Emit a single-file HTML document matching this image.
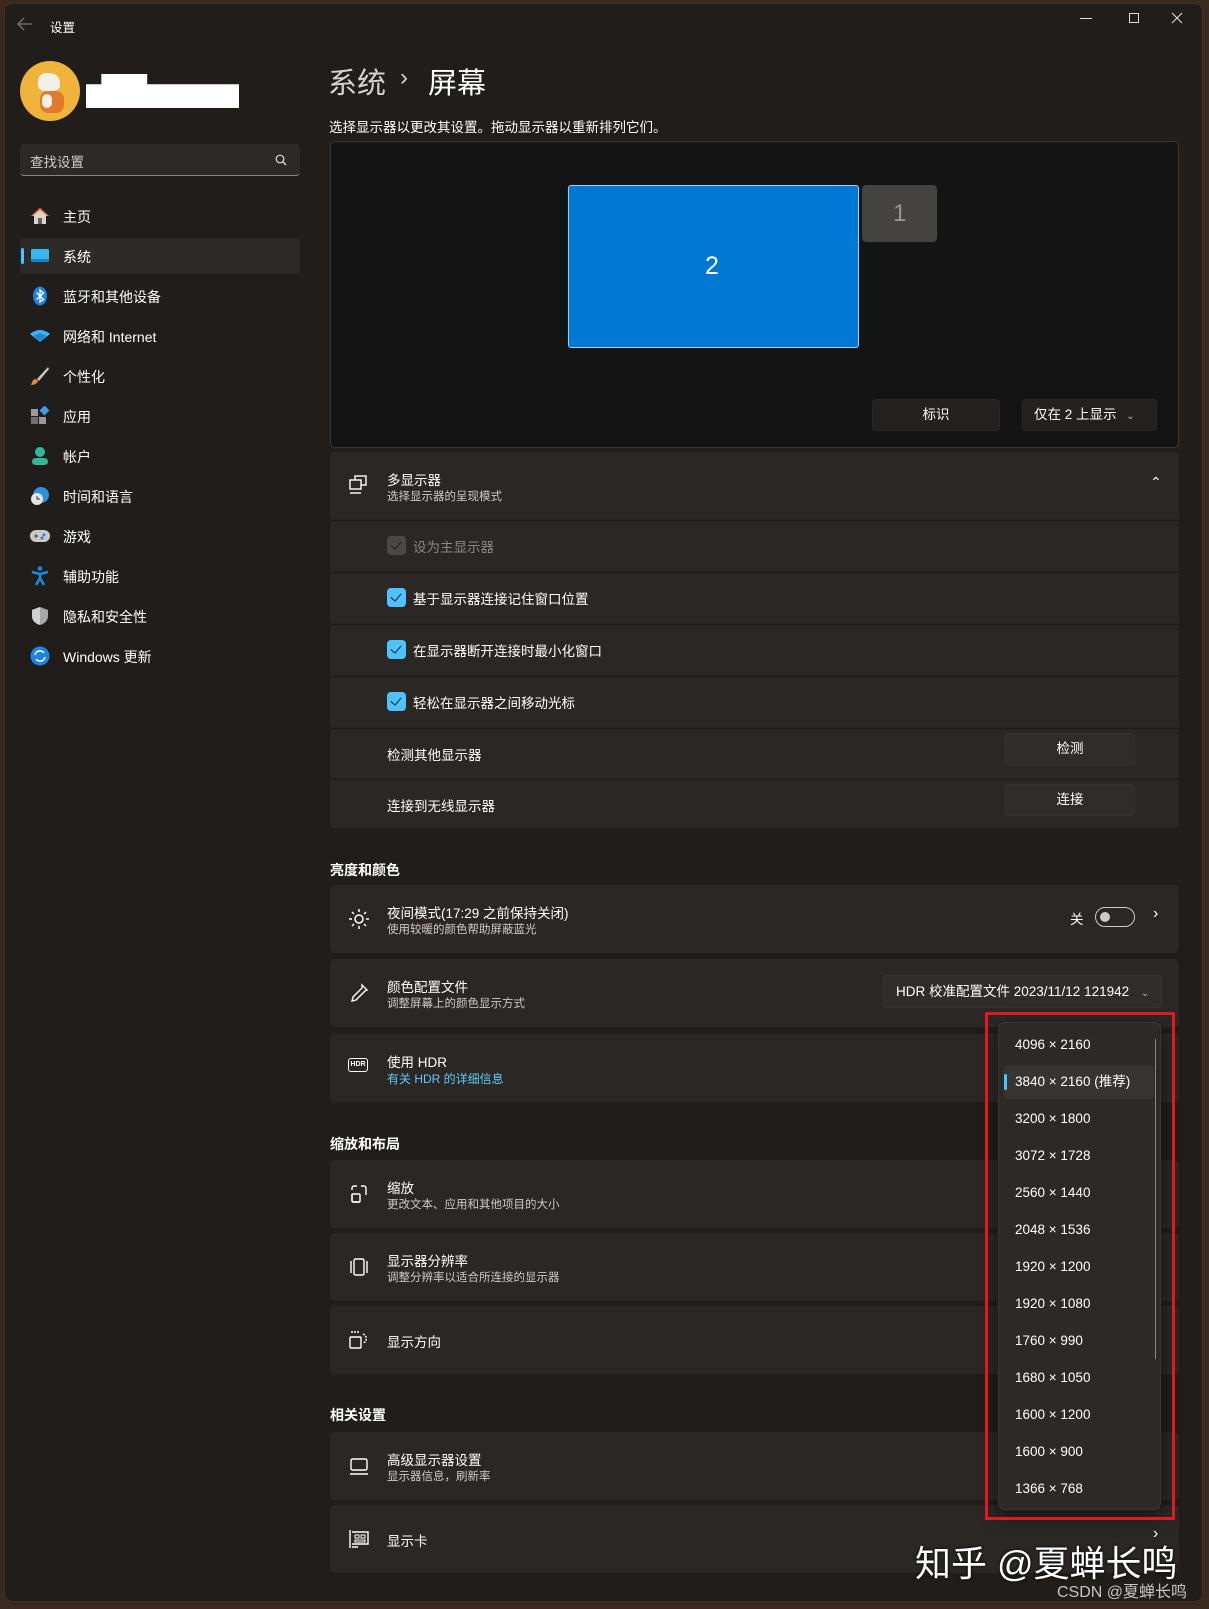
<!DOCTYPE html>
<html><head><meta charset="utf-8">
<style>
*{margin:0;padding:0;box-sizing:border-box}
body{width:1209px;height:1609px;overflow:hidden;background:#3a2a1e;font-family:"Liberation Sans","Noto Sans CJK SC",sans-serif;color:#fff;position:relative}
.win{position:absolute;left:4px;top:3px;width:1199px;height:1599px;background:#211d1b;border:1px solid #3a3532;border-radius:8px;overflow:hidden}
.wrap{position:absolute;left:-5px;top:-4px;width:1209px;height:1609px}
.a{position:absolute}
.t{position:absolute;white-space:nowrap}
.nav{position:absolute;left:24px;height:36px;width:276px;font-size:14px}
.nav .ic{position:absolute;left:6px;top:8px;width:20px;height:20px}
.nav span{position:absolute;left:39px;top:9px}
.card{position:absolute;left:326px;width:849px;background:#2b2725;border-radius:5px}
.row{position:absolute;left:326px;width:849px;background:#2b2725;border-top:1px solid #1e1b19}
.ttl{position:absolute;left:57px;font-size:13.5px}
.sub{position:absolute;left:57px;font-size:11.5px;color:#cfcac6}
.cb{position:absolute;left:57px;width:19px;height:19px;border-radius:4px;background:#4cc2ff}
.cb:after{content:"";position:absolute;left:6px;top:3px;width:5px;height:9px;border:solid #1a1a1a;border-width:0 1.5px 1.5px 0;transform:rotate(40deg)}
.btn{position:absolute;background:#2f2c2a;border:1px solid #383431;border-radius:4px;font-size:13.5px;text-align:center}
.sec{position:absolute;left:326px;font-size:14px;font-weight:bold}
.ico{position:absolute;left:18px;width:22px;height:22px}
.fl{position:absolute;left:994px;top:1019px;width:163px;height:488px;background:#2c2927;border:1px solid #3b3735;border-radius:7px;box-shadow:0 6px 18px rgba(0,0,0,.5)}
.fi{position:absolute;left:16px;font-size:13.5px;line-height:18px;height:18px;white-space:nowrap}
</style></head><body>
<div class="win"><div class="wrap">
<svg class="a" style="left:17px;top:17px" width="16" height="14" viewBox="0 0 16 14"><path d="M15 7H2M7 1L1 7l6 6" stroke="#777" stroke-width="1.3" fill="none"/></svg>
<div class="t" style="left:50px;top:17px;font-size:12.5px">设置</div>
<div class="a" style="left:1080px;top:18px;width:12px;height:1px;background:#ddd"></div>
<div class="a" style="left:1129px;top:13px;width:10px;height:10px;border:1px solid #ddd"></div>
<svg class="a" style="left:1171px;top:12px" width="12" height="12"><path d="M1 1L11 11M11 1L1 11" stroke="#ddd" stroke-width="1.1"/></svg>
<div class="a" style="left:20px;top:61px;width:60px;height:60px;border-radius:50%;background:#f0b43c;overflow:hidden">
 <div class="a" style="left:18px;top:12px;width:22px;height:18px;background:#f2eee8;border-radius:8px 10px 6px 6px"></div>
 <div class="a" style="left:20px;top:30px;width:24px;height:22px;background:#e07a2a;border-radius:8px"></div>
 <div class="a" style="left:22px;top:33px;width:10px;height:14px;background:#f6efe6;border-radius:5px"></div>
</div>
<div class="a" style="left:86px;top:74px;width:153px;height:34px;background:#fff;clip-path:polygon(0 30%,10% 30%,10% 0,40% 0,40% 30%,100% 30%,100% 100%,0 100%)"></div>
<div class="a" style="left:20px;top:144px;width:280px;height:32px;background:#2c2927;border-radius:4px;border-bottom:1px solid #8a8581"></div>
<div class="t" style="left:30px;top:151px;font-size:13.5px;color:#d0ccc8">查找设置</div>
<svg class="a" style="left:275px;top:154px" width="12" height="12"><circle cx="5" cy="5" r="3.8" stroke="#ddd" fill="none" stroke-width="1.2"/><path d="M8 8l3 3" stroke="#ddd" stroke-width="1.3"/></svg>
<div class="a" style="left:20px;top:238px;width:280px;height:36px;background:#2d2a28;border-radius:4px"></div>
<div class="a" style="left:21px;top:248px;width:3px;height:16px;background:#4cc2ff;border-radius:2px"></div>
<div class="nav" style="top:198px"><svg class="ic" viewBox="0 0 20 20"><path d="M10 2L1 10h3v8h12v-8h3z" fill="#d8d4d0"/><path d="M10 2L1 10h2L10 4l7 6h2z" fill="#e87b2c"/><rect x="8" y="12" width="4" height="6" fill="#6b5f58"/></svg><span>主页</span></div>
<div class="nav" style="top:238px"><svg class="ic" viewBox="0 0 20 20"><rect x="1" y="3" width="18" height="13" rx="1" fill="#3cb6ee"/><rect x="1" y="13" width="18" height="3" fill="#1c7fc4"/></svg><span>系统</span></div>
<div class="nav" style="top:278px"><svg class="ic" viewBox="0 0 20 20"><ellipse cx="10" cy="10" rx="7" ry="9.5" fill="#1b82e0"/><path d="M6.5 6.5l7 7L10 16V4l3.5 3L6.5 13.5" stroke="#fff" stroke-width="1.3" fill="none"/></svg><span>蓝牙和其他设备</span></div>
<div class="nav" style="top:318px"><svg class="ic" viewBox="0 0 20 20"><path d="M0 8Q10 0 20 8L10 16z" fill="#3ab4f0"/><path d="M4 10Q10 5 16 10L10 16z" fill="#1e8ad6"/></svg><span>网络和 Internet</span></div>
<div class="nav" style="top:358px"><svg class="ic" viewBox="0 0 20 20"><path d="M18 1L7 13l2 2L19 3z" fill="#c8c8c8"/><path d="M6 13c-3 0-4 3-5 6 3 0 6-1 7-4z" fill="#e88a30"/></svg><span>个性化</span></div>
<div class="nav" style="top:398px"><svg class="ic" viewBox="0 0 20 20"><rect x="1" y="3" width="7" height="7" fill="#9a9a9a"/><rect x="1" y="11" width="7" height="7" fill="#707070"/><rect x="9" y="11" width="7" height="7" fill="#9a9a9a"/><rect x="11" y="1" width="7" height="7" fill="#3aa0ea" transform="rotate(45 14.5 4.5)"/></svg><span>应用</span></div>
<div class="nav" style="top:438px"><svg class="ic" viewBox="0 0 20 20"><circle cx="10" cy="6" r="5" fill="#2fb89a"/><rect x="2" y="12" width="16" height="7" rx="3.5" fill="#2fb89a"/></svg><span>帐户</span></div>
<div class="nav" style="top:478px"><svg class="ic" viewBox="0 0 20 20"><circle cx="11" cy="9" r="8" fill="#2f8fd8"/><circle cx="7" cy="13" r="6" fill="#e4e4e4"/><path d="M7 10v3h3" stroke="#333" fill="none"/></svg><span>时间和语言</span></div>
<div class="nav" style="top:518px"><svg class="ic" viewBox="0 0 20 20"><rect x="0" y="4" width="20" height="12" rx="6" fill="#c9c9c9"/><circle cx="14" cy="9" r="1.5" fill="#2f7fd0"/><circle cx="12" cy="12" r="1.5" fill="#2f7fd0"/><path d="M4 10h4M6 8v4" stroke="#444"/></svg><span>游戏</span></div>
<div class="nav" style="top:558px"><svg class="ic" viewBox="0 0 20 20"><circle cx="10" cy="2.5" r="2.3" fill="#1a8ae0"/><path d="M2 6l8 2 8-2M10 8v4l-4 7M10 12l4 7" stroke="#1a8ae0" stroke-width="2.6" fill="none"/></svg><span>辅助功能</span></div>
<div class="nav" style="top:598px"><svg class="ic" viewBox="0 0 20 20"><path d="M10 1l8 3v6c0 5-4 8-8 9-4-1-8-4-8-9V4z" fill="#a8a8a8"/><path d="M10 1v18c-4-1-8-4-8-9V4z" fill="#d0d0d0"/></svg><span>隐私和安全性</span></div>
<div class="nav" style="top:638px"><svg class="ic" viewBox="0 0 20 20"><circle cx="10" cy="10" r="9.5" fill="#1a86e0"/><path d="M5 9a5 5 0 0 1 9-2M15 11a5 5 0 0 1-9 2" stroke="#fff" stroke-width="1.5" fill="none"/></svg><span>Windows 更新</span></div>

<div class="t" style="left:328px;top:60px;font-size:29px;color:#d6d2ce">系统</div>
<div class="t" style="left:400px;top:64px;font-size:24px;color:#d6d2ce">›</div>
<div class="t" style="left:428px;top:60px;font-size:29px">屏幕</div>
<div class="t" style="left:329px;top:116px;font-size:13.5px">选择显示器以更改其设置。拖动显示器以重新排列它们。</div>
<div class="a" style="left:330px;top:141px;width:849px;height:307px;background:#151414;border:1px solid #3a3633;border-radius:5px"></div>
<div class="a" style="left:568px;top:185px;width:291px;height:163px;background:#0078d4;border:1px solid #9ccff5;border-radius:3px"></div>
<div class="t" style="left:705px;top:252px;font-size:25px">2</div>
<div class="a" style="left:862px;top:185px;width:75px;height:57px;background:#454342;border-radius:4px"></div>
<div class="t" style="left:893px;top:200px;font-size:24px;color:#9a9896">1</div>
<div class="btn" style="left:872px;top:399px;width:128px;height:32px;line-height:30px;background:#232120;border-color:#2a2726">标识</div>
<div class="btn" style="left:1022px;top:399px;width:135px;height:32px;line-height:30px;text-align:left;padding-left:11px;background:#232120;border-color:#2a2726">仅在 2 上显示 <span style="font-size:10px;color:#bbb;margin-left:6px">⌄</span></div>
<div class="card" style="left:330px;top:452px;height:376px;background:#262320"></div>
<div class="row" style="left:330px;top:452px;height:67px;border-top:none;border-radius:5px 5px 0 0"><svg class="ico" style="top:22px" viewBox="0 0 22 22"><rect x="7" y="2" width="11" height="9" stroke="#fff" fill="none" stroke-width="1.4"/><rect x="2" y="6" width="11" height="9" stroke="#fff" fill="#2b2725" stroke-width="1.4"/><path d="M2 19h11" stroke="#fff" stroke-width="1.4"/></svg><div class="ttl" style="top:17px">多显示器</div><div class="sub" style="top:36px">选择显示器的呈现模式</div><div class="t" style="left:820px;top:22px;font-size:14px">⌃</div></div>
<div class="row" style="left:330px;top:520px;height:51px"><div class="cb" style="top:15px;background:#4a4745"></div><div class="ttl" style="left:83px;top:15px;color:#8a8683">设为主显示器</div></div>
<div class="row" style="left:330px;top:572px;height:51px"><div class="cb" style="top:15px"></div><div class="ttl" style="left:83px;top:15px">基于显示器连接记住窗口位置</div></div>
<div class="row" style="left:330px;top:624px;height:51px"><div class="cb" style="top:15px"></div><div class="ttl" style="left:83px;top:15px">在显示器断开连接时最小化窗口</div></div>
<div class="row" style="left:330px;top:676px;height:51px"><div class="cb" style="top:15px"></div><div class="ttl" style="left:83px;top:15px">轻松在显示器之间移动光标</div></div>
<div class="row" style="left:330px;top:728px;height:50px"><div class="ttl" style="top:15px">检测其他显示器</div><div class="btn" style="left:675px;top:4px;width:130px;height:32px;line-height:30px">检测</div></div>
<div class="row" style="left:330px;top:779px;height:49px;border-radius:0 0 5px 5px"><div class="ttl" style="top:15px">连接到无线显示器</div><div class="btn" style="left:675px;top:4px;width:130px;height:32px;line-height:30px">连接</div></div>

<div class="sec" style="left:330px;top:860px">亮度和颜色</div>
<div class="card" style="left:330px;top:885px;height:68px"><svg class="ico" style="top:23px" viewBox="0 0 22 22"><circle cx="11" cy="11" r="4" stroke="#fff" fill="none" stroke-width="1.5"/><path d="M11 1v3M11 18v3M1 11h3M18 11h3M4 4l2 2M16 16l2 2M4 18l2-2M16 6l2-2" stroke="#fff" stroke-width="1.5"/></svg><div class="ttl" style="top:17px">夜间模式(17:29 之前保持关闭)</div><div class="sub" style="top:36px">使用较暖的颜色帮助屏蔽蓝光</div><div class="t" style="left:740px;top:23px;font-size:13.5px">关</div><div class="a" style="left:765px;top:22px;width:40px;height:20px;border:1px solid #cfcac6;border-radius:10px"><div class="a" style="left:4px;top:4px;width:10px;height:10px;border-radius:50%;background:#cfcac6"></div></div><div class="t" style="left:823px;top:20px;font-size:16px">›</div></div>
<div class="card" style="left:330px;top:959px;height:68px"><svg class="ico" style="top:23px" viewBox="0 0 22 22"><path d="M14 3l5 5-2 1-9 9-4 1 1-4 9-9z" stroke="#fff" fill="none" stroke-width="1.4"/></svg><div class="ttl" style="top:17px">颜色配置文件</div><div class="sub" style="top:36px">调整屏幕上的颜色显示方式</div><div class="btn" style="left:553px;top:16px;width:279px;height:33px;line-height:31px;text-align:left;padding-left:12px">HDR 校准配置文件 2023/11/12 121942 <span style="font-size:10px;color:#bbb;margin-left:8px">⌄</span></div></div>
<div class="card" style="left:330px;top:1034px;height:68px"><div class="ico" style="top:24px;width:20px;height:14px;border:1.5px solid #fff;border-radius:3px;font-size:7px;font-weight:bold;text-align:center;line-height:11px">HDR</div><div class="ttl" style="top:17px">使用 HDR</div><div class="sub" style="top:36px;color:#60c8f8;font-size:12px">有关 HDR 的详细信息</div></div>

<div class="sec" style="left:330px;top:1134px">缩放和布局</div>
<div class="card" style="left:330px;top:1160px;height:68px"><svg class="ico" style="top:23px" viewBox="0 0 22 22"><path d="M9 3H6a2 2 0 0 0-2 2v2M13 3h3a2 2 0 0 1 2 2v7M4 11v6a2 2 0 0 0 2 2h6" stroke="#fff" fill="none" stroke-width="1.4"/><rect x="4" y="11" width="8" height="8" rx="1" stroke="#fff" fill="none" stroke-width="1.4"/></svg><div class="ttl" style="top:17px">缩放</div><div class="sub" style="top:36px">更改文本、应用和其他项目的大小</div></div>
<div class="card" style="left:330px;top:1233px;height:68px"><svg class="ico" style="top:23px" viewBox="0 0 22 22"><rect x="6" y="3" width="10" height="16" rx="1.5" stroke="#fff" fill="none" stroke-width="1.4"/><path d="M3 5v12M19 5v12" stroke="#fff" stroke-width="1.4"/></svg><div class="ttl" style="top:17px">显示器分辨率</div><div class="sub" style="top:36px">调整分辨率以适合所连接的显示器</div></div>
<div class="card" style="left:330px;top:1306px;height:68px"><svg class="ico" style="top:23px" viewBox="0 0 22 22"><rect x="2" y="8" width="11" height="11" rx="1" stroke="#fff" fill="none" stroke-width="1.4"/><path d="M3 3h9M15 5a5 5 0 0 1 2 8l-2 1" stroke="#fff" fill="none" stroke-width="1.4" stroke-dasharray="2 1"/></svg><div class="ttl" style="top:25px">显示方向</div></div>

<div class="sec" style="left:330px;top:1405px">相关设置</div>
<div class="card" style="left:330px;top:1432px;height:68px"><svg class="ico" style="top:23px" viewBox="0 0 22 22"><rect x="3" y="4" width="16" height="11" rx="1.5" stroke="#fff" fill="none" stroke-width="1.4"/><path d="M2 19h18" stroke="#fff" stroke-width="1.4"/></svg><div class="ttl" style="top:17px">高级显示器设置</div><div class="sub" style="top:36px">显示器信息，刷新率</div></div>
<div class="card" style="left:330px;top:1505px;height:68px"><svg class="ico" style="top:23px" viewBox="0 0 22 22"><path d="M2 2v18M4 4h16v12H4M4 19h6" stroke="#fff" fill="none" stroke-width="1.4"/><rect x="7" y="7" width="4" height="3" stroke="#fff" fill="none"/><rect x="13" y="7" width="4" height="3" stroke="#fff" fill="none"/><rect x="7" y="12" width="10" height="2" stroke="#fff" fill="none"/></svg><div class="ttl" style="top:25px">显示卡</div><div class="t" style="left:823px;top:20px;font-size:16px">›</div></div>

<div class="fl" style="left:998px;top:1022px">
<div class="a" style="left:5px;top:42px;width:150px;height:34px;background:#383432;border-radius:4px"></div>
<div class="a" style="left:5px;top:51px;width:3px;height:16px;background:#4cc2ff;border-radius:2px"></div>
<div class="a" style="left:156px;top:16px;width:1px;height:320px;background:#8a8683"></div>
<div class="fi" style="top:13px">4096 × 2160</div>
<div class="fi" style="top:50px">3840 × 2160 (推荐)</div>
<div class="fi" style="top:87px">3200 × 1800</div>
<div class="fi" style="top:124px">3072 × 1728</div>
<div class="fi" style="top:161px">2560 × 1440</div>
<div class="fi" style="top:198px">2048 × 1536</div>
<div class="fi" style="top:235px">1920 × 1200</div>
<div class="fi" style="top:272px">1920 × 1080</div>
<div class="fi" style="top:309px">1760 × 990</div>
<div class="fi" style="top:346px">1680 × 1050</div>
<div class="fi" style="top:383px">1600 × 1200</div>
<div class="fi" style="top:420px">1600 × 900</div>
<div class="fi" style="top:457px">1366 × 768</div>
</div>
<div class="a" style="left:985px;top:1012px;width:190px;height:508px;border:3.5px solid #e11a22"></div>
<div class="t" style="left:915px;top:1535px;font-size:36px;text-shadow:0 0 3px #000">知乎 @夏蝉长鸣</div>
<div class="t" style="left:1057px;top:1578px;font-size:16px;color:#c8c4c0">CSDN @夏蝉长鸣</div>
</div></div>
</body></html>
